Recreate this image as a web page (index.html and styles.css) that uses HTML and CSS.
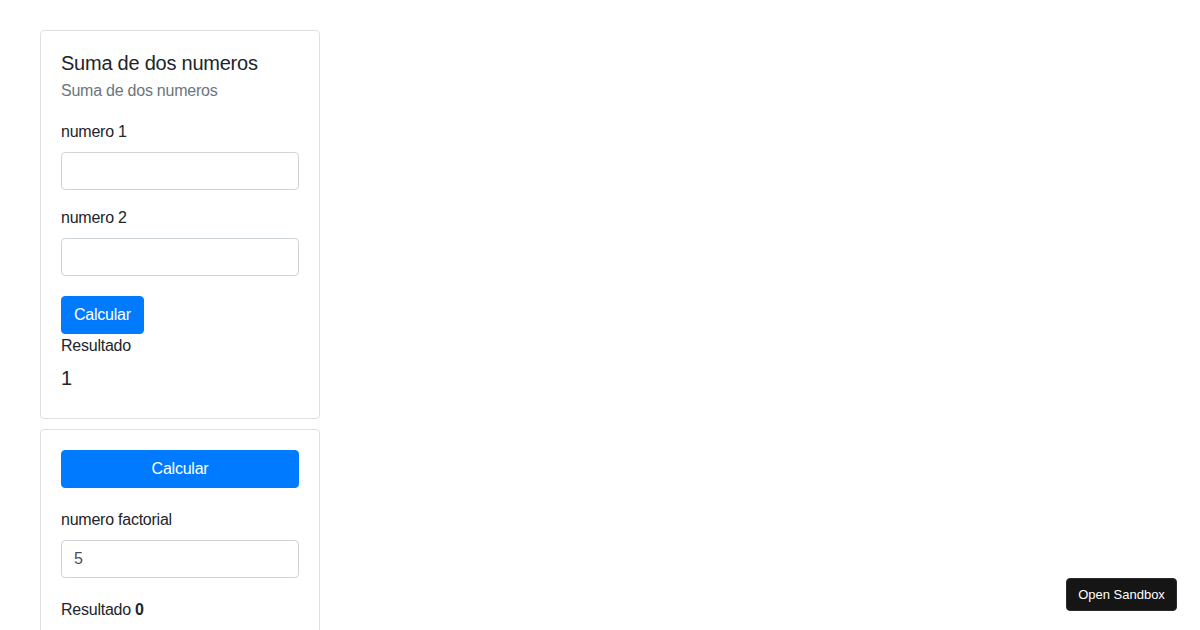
FILE: index.html
```html
<!DOCTYPE html>
<html lang="es">
<head>
<meta charset="utf-8">
<title>Suma de dos numeros</title>
<link rel="stylesheet" href="styles.css">
</head>
<body>
<main class="page">
  <section class="card">
    <h5 class="card-title">Suma de dos numeros</h5>
    <h6 class="card-subtitle">Suma de dos numeros</h6>
    <form class="form">
      <div class="form-group">
        <label class="label">numero 1</label>
        <input class="input" type="text">
      </div>
      <div class="form-group">
        <label class="label">numero 2</label>
        <input class="input" type="text">
      </div>
      <button type="button" class="btn">Calcular</button>
      <div class="result-label">Resultado</div>
      <h5 class="result-value">1</h5>
    </form>
  </section>
  <section class="card card-second">
    <button type="button" class="btn btn-block">Calcular</button>
    <div class="form-group form-group-fact">
      <label class="label">numero factorial</label>
      <input class="input" type="text" value="5">
    </div>
    <p class="result-line">Resultado <strong>0</strong></p>
    <p class="result-line">&nbsp;</p>
  </section>
</main>
<a class="sandbox-btn" href="#">Open Sandbox</a>
</body>
</html>
```
FILE: styles.css
```css
html, body {
  margin: 0;
  padding: 0;
  overflow: hidden;
  background: #fff;
}
body {
  font-family: "Liberation Sans", Arial, sans-serif;
  font-size: 16px;
  line-height: 1.5;
  color: #212529;
  letter-spacing: -0.015em;
}
.page {
  padding: 30px 0 0 40px;
  display: flex;
  flex-direction: column;
  gap: 10px;
}
.card {
  width: 280px;
  box-sizing: border-box;
  border: 1px solid rgba(0, 0, 0, 0.125);
  border-radius: 4px;
  padding: 20px;
  display: flex;
  flex-direction: column;
}
.card-title {
  margin: 0 0 12px;
  font-size: 20px;
  font-weight: 400;
  line-height: 1.2;
}
.card-subtitle {
  margin: -6px 0 0;
  font-size: 16px;
  font-weight: 400;
  line-height: 1.2;
  color: #6c757d;
}
.form {
  margin-top: 20px;
  display: flex;
  flex-direction: column;
  align-items: flex-start;
}
.form-group {
  display: flex;
  flex-direction: column;
  width: 100%;
  margin-bottom: 16px;
}
.label {
  display: block;
  margin-bottom: 8px;
}
.input {
  box-sizing: border-box;
  width: 100%;
  height: 38px;
  padding: 6px 12px;
  font-family: inherit;
  font-size: 16px;
  line-height: 1.5;
  letter-spacing: inherit;
  color: #495057;
  background: #fff;
  border: 1px solid #ced4da;
  border-radius: 4px;
  margin: 0;
}
.btn {
  margin-top: 4px;
  height: 38px;
  padding: 6px 12px;
  font-family: inherit;
  font-size: 16px;
  line-height: 1.5;
  letter-spacing: inherit;
  color: #fff;
  background: #007bff;
  border: 1px solid #007bff;
  border-radius: 4px;
}
.result-label {
  margin-bottom: 8px;
}
.result-value {
  margin: 0 0 8px;
  font-size: 20px;
  font-weight: 400;
  line-height: 1.2;
}
.btn-block {
  width: 100%;
  margin-top: 0;
}
.form-group-fact {
  margin-top: 20px;
  margin-bottom: 20px;
}
.result-line {
  margin: 0 0 16px;
}
.result-line strong {
  font-weight: 700;
}
.sandbox-btn {
  position: fixed;
  right: 23px;
  bottom: 19px;
  width: 111px;
  height: 33px;
  box-sizing: border-box;
  display: flex;
  align-items: center;
  justify-content: center;
  background: #151515;
  color: #fff;
  border-radius: 4px;
  border: 1px solid #2a2a2a;
  font-family: "Liberation Sans", Arial, sans-serif;
  font-size: 13px;
  letter-spacing: 0;
  text-decoration: none;
}
```
